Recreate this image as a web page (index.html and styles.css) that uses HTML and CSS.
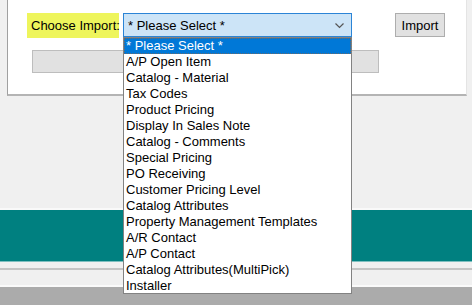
FILE: index.html
```html
<!DOCTYPE html>
<html>
<head>
<meta charset="utf-8">
<link rel="stylesheet" href="styles.css">
</head>
<body>
<div class="page">
  <div class="panel">
    <div class="row">
      <span class="label">Choose Import:</span>
      <div class="select">
        <span>* Please Select *</span>
        <svg class="chev" width="9" height="6" viewBox="0 0 9 6"><polyline points="0.5,0.5 4.5,4.5 8.5,0.5" fill="none" stroke="#555" stroke-width="1.2"/></svg>
      </div>
      <button class="btn">Import</button>
    </div>
    <div class="bar"></div>
  </div>
  <div class="sep-light"></div>
  <div class="teal"></div>
  <div class="teal-edge"></div>
  <div class="gap1"></div>
  <div class="line-gray"></div>
  <div class="gap2"></div>
  <div class="line-white"></div>
  <div class="bottom"></div>

  <ul class="list">
    <li class="sel">* Please Select *</li>
    <li>A/P Open Item</li>
    <li>Catalog - Material</li>
    <li>Tax Codes</li>
    <li>Product Pricing</li>
    <li>Display In Sales Note</li>
    <li>Catalog - Comments</li>
    <li>Special Pricing</li>
    <li>PO Receiving</li>
    <li>Customer Pricing Level</li>
    <li>Catalog Attributes</li>
    <li>Property Management Templates</li>
    <li>A/R Contact</li>
    <li>A/P Contact</li>
    <li>Catalog Attributes(MultiPick)</li>
    <li>Installer</li>
  </ul>
</div>
</body>
</html>
```
FILE: styles.css
```css
html, body {
  margin: 0;
  padding: 0;
}
body {
  background: #f0f0f0;
  font-family: "Liberation Sans", Arial, sans-serif;
  font-size: 13px;
  color: #000;
}
.page {
  position: relative;
  width: 472px;
  height: 305px;
  overflow: hidden;
  display: flex;
  flex-direction: column;
}
.panel {
  box-sizing: border-box;
  margin-left: 7px;
  width: 460px;
  height: 96px;
  flex: none;
  background: #fff;
  border-left: 1px solid #a0a0a0;
  border-bottom: 2px solid #b4b4b4;
  border-right: 1px solid #e4e4e4;
  padding-top: 13px;
  display: flex;
  flex-direction: column;
}
.row {
  display: flex;
  align-items: flex-start;
  padding-left: 19px;
}
.label {
  background: #eef55c;
  height: 25px;
  line-height: 25px;
  padding: 0 3px 0 4px;
  width: 85px;
  white-space: nowrap;
}
.select {
  box-sizing: border-box;
  margin-left: 4px;
  width: 229px;
  height: 24px;
  border: 1px solid #2b84d6;
  background: #cce4f7;
  display: flex;
  align-items: center;
  justify-content: space-between;
  padding: 0 7px 0 4px;
  font-size: 13px;
}
.chev {
  margin-top: 2px;
}
.btn {
  box-sizing: border-box;
  margin: 0 0 0 43px;
  width: 50px;
  height: 24px;
  padding: 0;
  background: #e1e1e1;
  border: 1px solid #adadad;
  font-family: "Liberation Sans", Arial, sans-serif;
  font-size: 13px;
  color: #000;
}
.bar {
  box-sizing: border-box;
  margin: 12px 0 0 24px;
  width: 347px;
  height: 23px;
  background: #e1e1e1;
  border: 1px solid #bdbdbd;
}
.sep-light {
  margin-top: 112px;
  height: 2px;
  background: #f9f9f9;
  flex: none;
}
.teal {
  height: 51px;
  background: #008080;
  flex: none;
}
.teal-edge {
  height: 1px;
  background: #7fbfbf;
  flex: none;
}
.gap1 {
  height: 6px;
  flex: none;
}
.line-gray {
  height: 2px;
  background: #c4c4c4;
  flex: none;
}
.gap2 {
  height: 15px;
  flex: none;
}
.line-white {
  height: 2px;
  background: #fafafa;
  flex: none;
}
.bottom {
  flex: 1;
  background: #ababab;
}
.list {
  position: absolute;
  left: 123px;
  top: 37px;
  box-sizing: border-box;
  width: 229px;
  height: 257px;
  margin: 0;
  padding: 0;
  list-style: none;
  background: #fff;
  border: 1px solid #828282;
  font-size: 13px;
}
.list li {
  height: 16px;
  line-height: 16px;
  padding-left: 2px;
  white-space: nowrap;
}
.list li.sel {
  background: #0078d7;
  color: #fff;
  outline: 1px dotted #6a6a6a;
  outline-offset: -1px;
}
```
